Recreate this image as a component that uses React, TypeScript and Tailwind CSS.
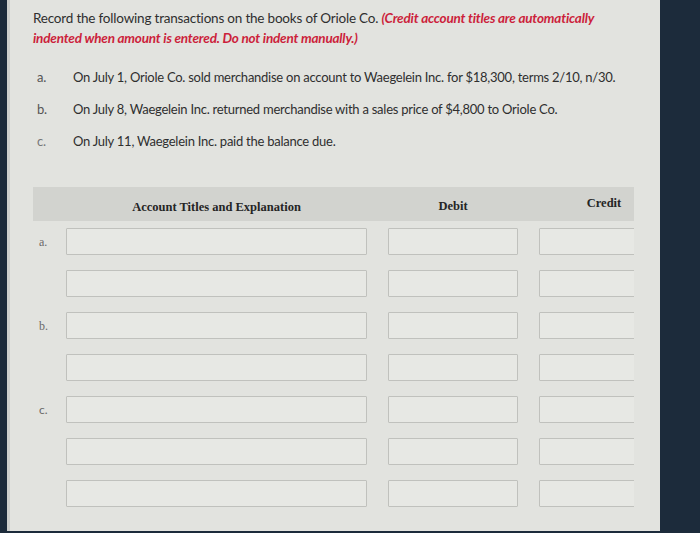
import React from "react";

const rows = ["a.", "", "b.", "", "c.", "", ""];

function Box({ w }: { w: string }) {
  return (
    <div
      className={`${w} h-[27px] shrink-0 border border-[#c0c1bd] bg-[#e7e8e4] rounded-[1px]`}
    />
  );
}

export default function App() {
  return (
    <div className="w-[700px] h-[533px] bg-[#1c2b3b] flex overflow-hidden font-['Lato','Noto_Sans',sans-serif]">
      <div className="ml-[7px] w-[653px] h-[531px] bg-[#e2e3df] border-l-[3px] border-[#cdcfcc] pl-[23px] pt-[8px] flex flex-col">
        <p className="text-[13.5px] leading-[20px] text-[#2f2f2f] tracking-[-0.2px]">
          Record the following transactions on the books of Oriole Co.{" "}
          <span className="text-[#cc1f3b] font-bold italic">
            (Credit account titles are automatically
            <br />
            indented when amount is entered. Do not indent manually.)
          </span>
        </p>

        <div className="mt-[20px] flex flex-col gap-[13px] text-[13px] leading-[19px] text-[#2f2f2f] tracking-[-0.25px]">
          <div className="flex">
            <span className="w-[40px] pl-[4px] text-[#555]">a.</span>
            <span>
              On July 1, Oriole Co. sold merchandise on account to Waegelein Inc. for $18,300, terms 2/10, n/30.
            </span>
          </div>
          <div className="flex">
            <span className="w-[40px] pl-[4px] text-[#555]">b.</span>
            <span>
              On July 8, Waegelein Inc. returned merchandise with a sales price of $4,800 to Oriole Co.
            </span>
          </div>
          <div className="flex">
            <span className="w-[40px] pl-[4px] text-[#777]">c.</span>
            <span>On July 11, Waegelein Inc. paid the balance due.</span>
          </div>
        </div>

        <div className="mt-[36px] w-[601px] overflow-hidden">
          <div className="h-[34px] bg-[#d2d3cf] flex font-['Liberation_Serif',serif] font-bold text-[12.5px] text-[#252525]">
            <div className="w-[33px] shrink-0" />
            <div className="w-[301px] shrink-0 text-center pt-[11px]">
              Account Titles and Explanation
            </div>
            <div className="w-[21px] shrink-0" />
            <div className="w-[130px] shrink-0 text-center pt-[10px]">Debit</div>
            <div className="w-[21px] shrink-0" />
            <div className="w-[130px] shrink-0 text-center pt-[7px]">Credit</div>
          </div>

          <div className="mt-[7px] flex flex-col gap-[15px]">
            {rows.map((label, i) => (
              <div key={i} className="flex items-center">
                <div
                  className={`w-[33px] shrink-0 pl-[6px] text-[12px] text-[#6a6a6a] ${
                    label === "c." ? "font-['Lato',sans-serif]" : "font-['Liberation_Serif',serif]"
                  }`}
                >
                  {label}
                </div>
                <Box w="w-[301px]" />
                <div className="w-[21px] shrink-0" />
                <Box w="w-[130px]" />
                <div className="w-[21px] shrink-0" />
                <Box w="w-[130px]" />
              </div>
            ))}
          </div>
        </div>
      </div>
    </div>
  );
}
